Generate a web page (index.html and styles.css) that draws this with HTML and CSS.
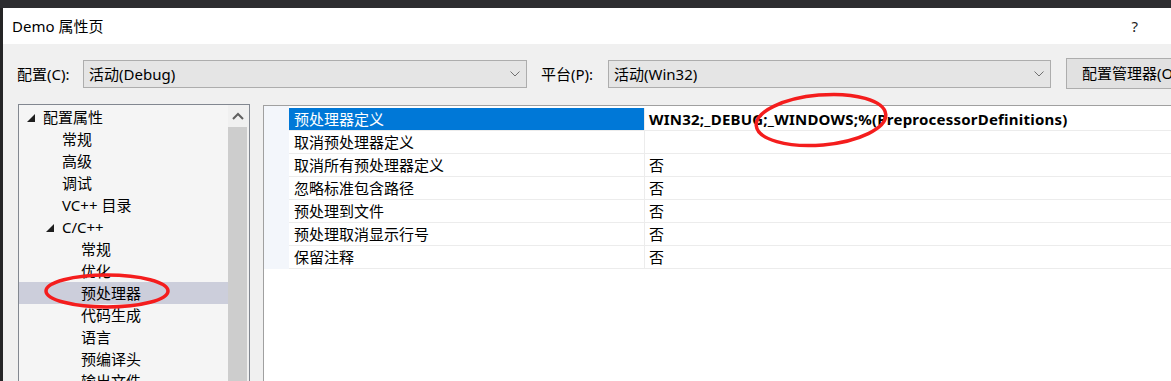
FILE: index.html
```html
<!DOCTYPE html>
<html lang="zh-CN">
<head>
<meta charset="utf-8">
<title>Demo 属性页</title>
<link rel="stylesheet" href="styles.css">
</head>
<body>
<div class="topband"></div>
<div class="main">
  <div class="leftstrip"></div>
  <div class="dialog">
    <div class="titlebar">
      <span class="title">Demo 属性页</span>
      <span class="help">?</span>
    </div>
    <div class="body">
      <div class="configrow">
        <span class="label label-config">配置(C):</span>
        <div class="combo combo-config">
          <span>活动(Debug)</span>
          <svg class="chev" width="10" height="6" viewBox="0 0 10 6"><path d="M0.5 0.5 L5 5 L9.5 0.5" fill="none" stroke="#707070" stroke-width="1"/></svg>
        </div>
        <span class="label label-platform">平台(P):</span>
        <div class="combo combo-platform">
          <span>活动(Win32)</span>
          <svg class="chev" width="10" height="6" viewBox="0 0 10 6"><path d="M0.5 0.5 L5 5 L9.5 0.5" fill="none" stroke="#707070" stroke-width="1"/></svg>
        </div>
        <div class="button">配置管理器(O)...</div>
      </div>
      <div class="panels">
        <div class="tree">
          <div class="tree-list">
            <div class="node l0"><span class="twisty"><svg width="8" height="8" viewBox="0 0 8 8"><polygon points="8,0 8,8 0,8" fill="#1e1e1e"/></svg></span>配置属性</div>
            <div class="node l1"><span class="twisty"></span>常规</div>
            <div class="node l1"><span class="twisty"></span>高级</div>
            <div class="node l1"><span class="twisty"></span>调试</div>
            <div class="node l1"><span class="twisty"></span>VC++ 目录</div>
            <div class="node l1"><span class="twisty"><svg width="8" height="8" viewBox="0 0 8 8"><polygon points="8,0 8,8 0,8" fill="#1e1e1e"/></svg></span>C/C++</div>
            <div class="node l2"><span class="twisty"></span>常规</div>
            <div class="node l2"><span class="twisty"></span>优化</div>
            <div class="node l2 selected"><span class="twisty"></span>预处理器</div>
            <div class="node l2"><span class="twisty"></span>代码生成</div>
            <div class="node l2"><span class="twisty"></span>语言</div>
            <div class="node l2"><span class="twisty"></span>预编译头</div>
            <div class="node l2"><span class="twisty"></span>输出文件</div>
          </div>
          <div class="scrollbar">
            <div class="scroll-up"><svg width="12" height="8" viewBox="0 0 12 8"><path d="M1 7 L6 2 L11 7" fill="none" stroke="#606060" stroke-width="2"/></svg></div>
            <div class="scroll-thumb"></div>
          </div>
        </div>
        <div class="grid">
          <div class="gutter"></div>
          <div class="table">
            <div class="row"><div class="prop sel">预处理器定义</div><div class="val bold">WIN32;_DEBUG;_WINDOWS;%(PreprocessorDefinitions)</div></div>
            <div class="row"><div class="prop">取消预处理器定义</div><div class="val"></div></div>
            <div class="row"><div class="prop">取消所有预处理器定义</div><div class="val">否</div></div>
            <div class="row"><div class="prop">忽略标准包含路径</div><div class="val">否</div></div>
            <div class="row"><div class="prop">预处理到文件</div><div class="val">否</div></div>
            <div class="row"><div class="prop">预处理取消显示行号</div><div class="val">否</div></div>
            <div class="row"><div class="prop">保留注释</div><div class="val">否</div></div>
          </div>
        </div>
      </div>
    </div>
  </div>
</div>
<svg class="annot" width="1171" height="381" viewBox="0 0 1171 381">
  <ellipse cx="821" cy="120" rx="65" ry="25" transform="rotate(-5 821 120)" fill="none" stroke="#f41d1d" stroke-width="3.5"/>
  <ellipse cx="107" cy="291" rx="61" ry="16" fill="none" stroke="#f41d1d" stroke-width="3.5"/>
</svg>
</body>
</html>
```
FILE: styles.css
```css
html, body {
  margin: 0;
  padding: 0;
}
body {
  width: 1171px;
  height: 381px;
  overflow: hidden;
  position: relative;
  background: #2d2d30;
  font-family: "Noto Sans", "Noto Sans CJK SC", sans-serif;
  font-size: 15px;
  color: #000;
}
.topband {
  height: 8px;
  background: #2d2d30;
}
.main {
  display: flex;
  height: 373px;
}
.leftstrip {
  width: 3px;
  flex-shrink: 0;
  background: #252526;
}
.dialog {
  flex: 1;
  min-width: 0;
  overflow: hidden;
  display: flex;
  flex-direction: column;
  background: #f0f0f0;
}
.titlebar {
  height: 36px;
  flex-shrink: 0;
  background: #fff;
  display: flex;
  align-items: center;
  justify-content: space-between;
  padding-left: 9px;
  padding-right: 33px;
}
.title {
  font-size: 15px;
  line-height: 20px;
  margin-top: -1px;
}
.help {
  font-size: 15px;
  line-height: 20px;
  color: #1e1e1e;
}
.body {
  flex: 1;
  min-height: 0;
  display: flex;
  flex-direction: column;
}
.configrow {
  display: flex;
  align-items: center;
  height: 31px;
  margin-top: 14px;
  padding-left: 14px;
  flex-shrink: 0;
}
.label {
  flex-shrink: 0;
  white-space: nowrap;
  line-height: 20px;
}
.label-config {
  width: 66px;
}
.label-platform {
  width: 67px;
  margin-left: 14px;
}
.combo {
  flex-shrink: 0;
  box-sizing: border-box;
  height: 28px;
  border: 1px solid #adadad;
  background: #e5e5e5;
  display: flex;
  align-items: center;
  justify-content: space-between;
  padding-left: 5px;
  padding-right: 6px;
  line-height: 20px;
}
.combo-config {
  width: 444px;
}
.combo-platform {
  width: 443px;
}
.chev {
  display: block;
}
.button {
  flex-shrink: 0;
  box-sizing: border-box;
  height: 31px;
  width: 140px;
  margin-left: 15px;
  border: 1px solid #adadad;
  background: #e1e1e1;
  padding-left: 15px;
  line-height: 29px;
  white-space: nowrap;
}
.panels {
  display: flex;
  margin-top: 15px;
  padding-left: 15px;
  flex: 1;
  min-height: 0;
}
.tree {
  box-sizing: border-box;
  width: 232px;
  flex-shrink: 0;
  border: 1px solid #828790;
  border-bottom: 0;
  background: #f5f5f5;
  display: flex;
}
.tree-list {
  flex: 1;
  padding-top: 1px;
}
.node {
  height: 22px;
  display: flex;
  align-items: center;
  white-space: nowrap;
  line-height: 20px;
}
.node.l0 { padding-left: 8px; }
.node.l1 { padding-left: 27px; }
.node.l2 { padding-left: 46px; }
.node.selected {
  background: #cccedb;
}
.twisty {
  width: 16px;
  flex-shrink: 0;
  display: flex;
  align-items: center;
  height: 22px;
}
.twisty svg {
  display: block;
  margin-top: 2px;
}
.scrollbar {
  width: 21px;
  flex-shrink: 0;
  background: #f0f0f0;
  display: flex;
  flex-direction: column;
}
.scroll-up {
  height: 22px;
  display: flex;
  align-items: center;
  justify-content: center;
  padding-right: 2px;
}
.scroll-up svg {
  display: block;
}
.scroll-thumb {
  flex: 1;
  width: 19px;
  background: #cdcdcd;
}
.grid {
  flex: 1;
  min-width: 0;
  margin-left: 13px;
  margin-top: 1px;
  border-left: 1px solid #a0a0a0;
  border-top: 1px solid #a0a0a0;
  background: #fff;
  display: flex;
  align-items: flex-start;
}
.gutter {
  width: 25px;
  flex-shrink: 0;
  height: 163px;
  background: #f3f6fb;
}
.table {
  flex: 1;
  min-width: 0;
  padding-top: 2px;
}
.row {
  display: grid;
  grid-template-columns: 355px 1fr;
  height: 23px;
  box-sizing: border-box;
  border-bottom: 1px solid #ececec;
}
.prop {
  padding-left: 5px;
  line-height: 22px;
  white-space: nowrap;
}
.prop.sel {
  background: #0078d7;
  color: #fff;
}
.val {
  border-left: 1px solid #ececec;
  padding-left: 4px;
  line-height: 22px;
  white-space: nowrap;
}
.val.bold {
  font-weight: bold;
  letter-spacing: 0.22px;
}
.annot {
  position: absolute;
  top: 0;
  left: 0;
  pointer-events: none;
}
```
